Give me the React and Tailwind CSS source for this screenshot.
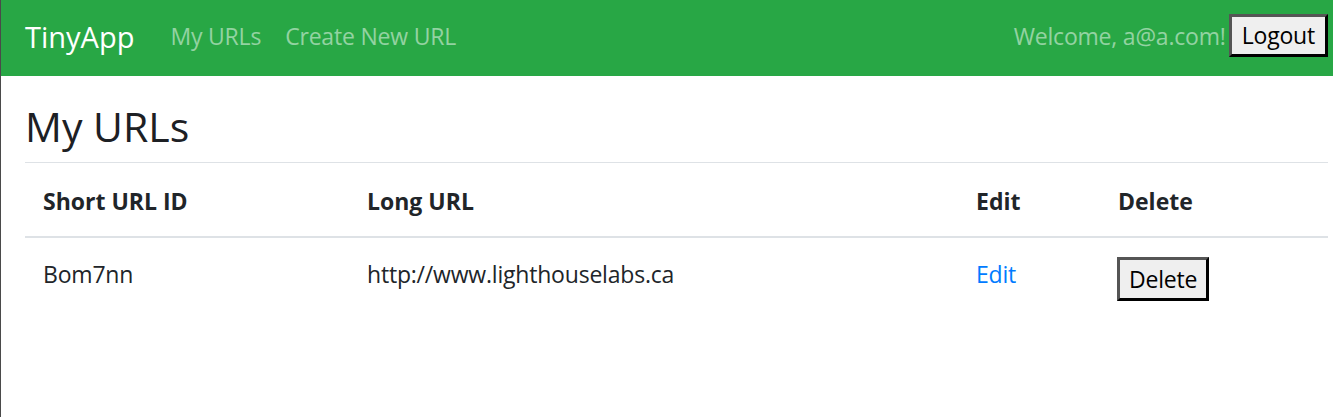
export default function App() {
  const urls = [{ id: "Bom7nn", longURL: "http://www.lighthouselabs.ca" }];

  return (
    <div
      className="min-h-screen bg-white border-l border-[#4a4a4a] text-[#212529]"
      style={{ fontFamily: '"Open Sans", "Noto Sans", sans-serif' }}
    >
      <nav className="h-[76px] bg-[#28a745] flex items-center justify-between pl-6 pr-[5px]">
        <div className="flex items-center pb-[3px]">
          <span className="text-[29px] text-white mr-6">TinyApp</span>
          <a className="px-3 text-[23px] tracking-[-0.2px] text-white/50">My URLs</a>
          <a className="px-3 text-[23px] tracking-[-0.2px] text-white/50">Create New URL</a>
        </div>
        <div className="flex items-center">
          <span className="text-[23px] tracking-[-0.2px] text-white/50 mb-[3px]">Welcome, a@a.com!</span>
          <button className="ml-[3px] mb-[5px] h-[43px] px-[10px] bg-[#efefef] text-black text-[23px] tracking-[-0.2px] border-[3px] border-t-[#555] border-l-[#555] border-b-black border-r-black">
            Logout
          </button>
        </div>
      </nav>

      <main className="pl-6 pr-[5px]">
        <h3 className="text-[41px] font-medium leading-[50px] pt-[25px] pb-[11px] text-[#1d2024]">My URLs</h3>

        <table className="w-full table-fixed border-collapse text-[23px] leading-[36px] tracking-[-0.2px]">
          <colgroup>
            <col className="w-[324px]" />
            <col className="w-[609px]" />
            <col className="w-[142px]" />
            <col />
          </colgroup>
          <thead>
            <tr>
              <th className="text-left font-bold tracking-normal px-[18px] pt-[3px] h-[74px] border-t border-b-[2px] border-[#dee2e6]">Short URL ID</th>
              <th className="text-left font-bold tracking-normal px-[18px] pt-[3px] h-[74px] border-t border-b-[2px] border-[#dee2e6]">Long URL</th>
              <th className="text-left font-bold tracking-normal px-[18px] pt-[3px] h-[74px] border-t border-b-[2px] border-[#dee2e6]">Edit</th>
              <th className="text-left font-bold tracking-normal px-[18px] pt-[3px] h-[74px] border-t border-b-[2px] border-[#dee2e6]">Delete</th>
            </tr>
          </thead>
          <tbody>
            {urls.map((url) => (
              <tr key={url.id}>
                <td className="px-[18px] py-[18px] align-top border-t-[2px] border-[#dee2e6]">{url.id}</td>
                <td className="px-[18px] py-[18px] align-top border-t-[2px] border-[#dee2e6]">{url.longURL}</td>
                <td className="px-[18px] py-[18px] align-top border-t-[2px] border-[#dee2e6]">
                  <a className="text-[#007bff]">Edit</a>
                </td>
                <td className="px-[18px] py-[18px] align-top border-t-[2px] border-[#dee2e6]">
                  <button className="-ml-px mt-px h-[44px] px-[9px] leading-[36px] bg-[#efefef] text-black text-[23px] tracking-[-0.2px] border-[3px] border-t-[#555] border-l-[#555] border-b-black border-r-black">
                    Delete
                  </button>
                </td>
              </tr>
            ))}
          </tbody>
        </table>
      </main>
    </div>
  );
}
